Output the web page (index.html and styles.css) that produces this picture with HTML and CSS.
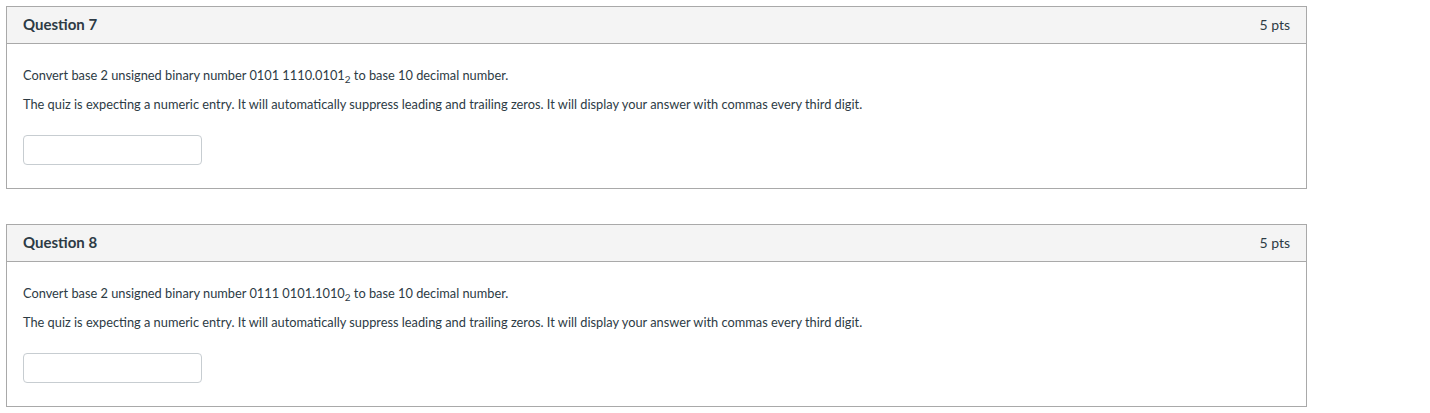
FILE: index.html
```html
<!DOCTYPE html>
<html>
<head>
<meta charset="utf-8">
<link rel="stylesheet" href="styles.css">
</head>
<body>
<div class="quiz">
  <div class="question">
    <div class="q-header">
      <span class="q-title">Question 7</span>
      <span class="q-pts">5 pts</span>
    </div>
    <div class="q-body">
      <p>Convert base 2 unsigned binary number 0101 1110.0101<sub>2</sub> to base 10 decimal number.</p>
      <p>The quiz is expecting a numeric entry. It will automatically suppress leading and trailing zeros. It will display your answer with commas every third digit.</p>
      <input class="q-input" type="text">
    </div>
  </div>
  <div class="question">
    <div class="q-header">
      <span class="q-title">Question 8</span>
      <span class="q-pts">5 pts</span>
    </div>
    <div class="q-body">
      <p>Convert base 2 unsigned binary number 0111 0101.1010<sub>2</sub> to base 10 decimal number.</p>
      <p>The quiz is expecting a numeric entry. It will automatically suppress leading and trailing zeros. It will display your answer with commas every third digit.</p>
      <input class="q-input" type="text">
    </div>
  </div>
</div>
</body>
</html>
```

FILE: styles.css
```css
html, body {
  margin: 0;
  padding: 0;
  background: #fff;
}
body {
  padding: 6px;
  font-family: Lato, "Open Sans", "Liberation Sans", sans-serif;
  color: #2d3b45;
}
.quiz {
  width: 1301px;
  display: flex;
  flex-direction: column;
  gap: 35px;
}
.question {
  border: 1px solid #a9a9a9;
  background: #fff;
}
.q-header {
  display: flex;
  justify-content: space-between;
  align-items: center;
  height: 36px;
  padding: 0 16px 2px 16px;
  box-sizing: border-box;
  height: 37px;
  background: #f4f4f4;
  border-bottom: 1px solid #a9a9a9;
}
.q-title {
  font-size: 15px;
  font-weight: 700;
  color: #2d3b45;
}
.q-pts {
  font-size: 14px;
  color: #2d3b45;
}
.q-body {
  padding: 22px 16px 23px 16px;
  font-size: 12.8px;
  line-height: 19px;
}
.q-body p {
  margin: 0 0 10px 0;
}
.q-body sub {
  font-size: 10px;
  line-height: 0;
  vertical-align: -3px;
}
.q-input {
  display: block;
  margin-top: 21px;
  box-sizing: border-box;
  width: 179px;
  height: 30px;
  border: 1px solid #c7cdd1;
  border-radius: 4px;
  background: #fff;
  padding: 0 8px;
}
```
